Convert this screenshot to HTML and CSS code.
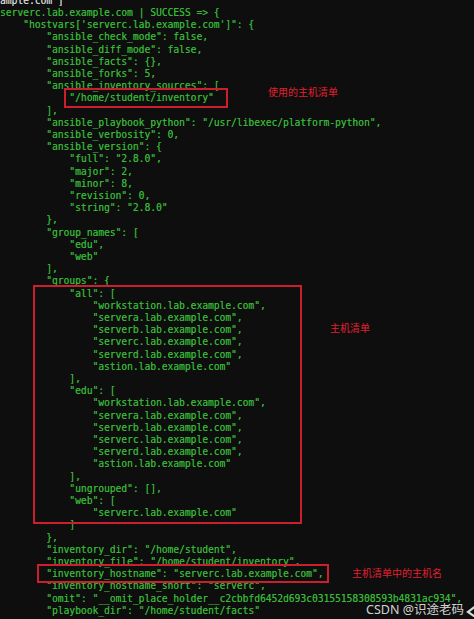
FILE: index.html
```html
<!DOCTYPE html>
<html lang="zh">
<head>
<meta charset="utf-8">
<link rel="stylesheet" href="styles.css">
</head>
<body>
<div class="screen">
<pre class="term"><span class="prev">ample.com ]</span>
serverc.lab.example.com | SUCCESS => {
    "hostvars['serverc.lab.example.com']": {
        "ansible_check_mode": false,
        "ansible_diff_mode": false,
        "ansible_facts": {},
        "ansible_forks": 5,
        "ansible_inventory_sources": [
            "/home/student/inventory"
        ],
        "ansible_playbook_python": "/usr/libexec/platform-python",
        "ansible_verbosity": 0,
        "ansible_version": {
            "full": "2.8.0",
            "major": 2,
            "minor": 8,
            "revision": 0,
            "string": "2.8.0"
        },
        "group_names": [
            "edu",
            "web"
        ],
        "groups": {
            "all": [
                "workstation.lab.example.com",
                "servera.lab.example.com",
                "serverb.lab.example.com",
                "serverc.lab.example.com",
                "serverd.lab.example.com",
                "astion.lab.example.com"
            ],
            "edu": [
                "workstation.lab.example.com",
                "servera.lab.example.com",
                "serverb.lab.example.com",
                "serverc.lab.example.com",
                "serverd.lab.example.com",
                "astion.lab.example.com"
            ],
            "ungrouped": [],
            "web": [
                "serverc.lab.example.com"
            ]
        },
        "inventory_dir": "/home/student",
        "inventory_file": "/home/student/inventory",
        "inventory_hostname": "serverc.lab.example.com",
        "inventory_hostname_short": "serverc",
        "omit": "__omit_place_holder__c2cbbfd6452d693c03155158308593b4831ac934",
        "playbook_dir": "/home/student/facts"</pre>

<div class="mark mark-sources"></div>
<span class="note note-sources">使用的主机清单</span>

<div class="mark mark-groups"></div>
<span class="note note-groups">主机清单</span>

<div class="mark mark-hostname"></div>
<span class="note note-hostname">主机清单中的主机名</span>

<div class="watermark">CSDN @识途老码<svg class="wm-icon" width="14" height="14" viewBox="0 0 14 14"><path d="M12 2 L3 9 L9 13" fill="none" stroke="#d8d8d8" stroke-width="2.2" stroke-linecap="round"/></svg></div>
</div>
</body>
</html>
```

FILE: styles.css
```css
html, body {
  margin: 0;
  padding: 0;
  background: #0e0e0e;
  overflow: hidden;
}

.screen {
  position: relative;
  width: 474px;
  height: 619px;
  overflow: hidden;
  background: #0e0e0e;
}

.term {
  margin: -5.3px 0 0 0;
  padding: 0;
  font-family: "DejaVu Sans Mono", "Liberation Mono", monospace;
  font-size: 9.6px;
  line-height: 12.2px;
  color: #38b838;
  text-shadow: 0.3px 0 0 rgba(56, 184, 56, 0.7);
  white-space: pre;
}

.prev {
  color: #dadada;
  text-shadow: 0.3px 0 0 rgba(218, 218, 218, 0.7);
}

.mark {
  position: absolute;
  border: 2px solid #cc1f2d;
  box-sizing: border-box;
}

.mark-sources {
  left: 64px;
  top: 88px;
  width: 164px;
  height: 20px;
}

.mark-groups {
  left: 33px;
  top: 285px;
  width: 269px;
  height: 239px;
}

.mark-hostname {
  left: 37px;
  top: 564px;
  width: 292px;
  height: 19px;
}

.note {
  position: absolute;
  font-family: "Noto Sans CJK SC", sans-serif;
  font-size: 10px;
  line-height: 12px;
  color: #e02030;
  white-space: nowrap;
}

.note-sources {
  left: 268px;
  top: 86px;
}

.note-groups {
  left: 330px;
  top: 322px;
}

.note-hostname {
  left: 352px;
  top: 567px;
}

.watermark {
  position: absolute;
  left: 366px;
  top: 602px;
  display: flex;
  align-items: center;
  gap: 1px;
  font-family: "Noto Sans", "Noto Sans CJK SC", sans-serif;
  font-size: 12.5px;
  line-height: 16px;
  color: rgba(235, 235, 235, 0.9);
  white-space: nowrap;
}

.wm-icon {
  flex: none;
}
```
